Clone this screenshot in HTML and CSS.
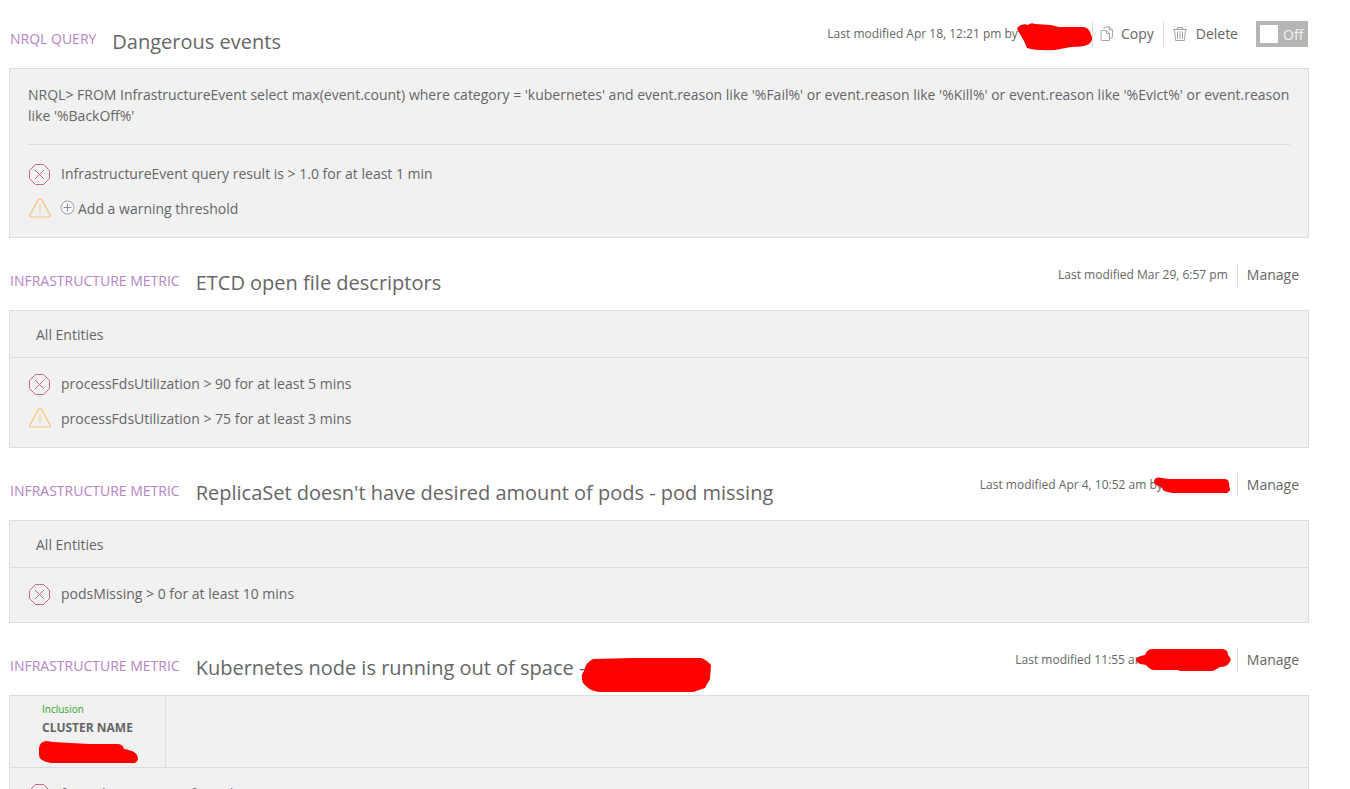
FILE: index.html
```html
<!DOCTYPE html>
<html lang="en">
<head>
<meta charset="utf-8">
<title>Alert conditions</title>
<link rel="stylesheet" href="styles.css">
</head>
<body>
<svg class="defs" aria-hidden="true">
  <symbol id="critical" viewBox="0 0 22 22"><path d="M6.500 1.500h8l6 6v8l-6 6h-8l-6-6v-8z M6 7l9 9m0-9l-9 9" fill="none" stroke="#d0667a"/></symbol>
  <symbol id="warning" viewBox="0 0 22 22"><path d="M9.500 1.600q1.500-2 3 0l8.600 15.400q.8 2-1.600 2h-17q-2.400 0-1.600-2z" fill="none" stroke="#f3c677" stroke-width="1.200"/><path d="M11 6v7.500m0 1.500v1.500" fill="none" stroke="#f6cf96" stroke-width="1.300"/></symbol>
</svg>
<main class="conditions">
  <section class="condition">
    <header class="head head-first">
      <span class="type">NRQL QUERY</span>
      <h2 class="title">Dangerous events</h2>
      <div class="actions actions-first">
        <span class="modified">Last modified Apr 18, 12:21 pm by</span>
        <svg class="mark mark-a" width="75" height="28" viewBox="0 0 75 28" aria-hidden="true"><path d="M1 4Q5 0 11 2Q14-1 18 1L34 2L42 4H66Q72 4 74 12Q77 17 72 21Q68 24 54 24L38 27Q20 28 10 25L7 18L3 11Q-1 7 1 4Z"/></svg>
        <button class="action" type="button"><svg class="action-icon" width="14" height="16" viewBox="0 0 14 16" aria-hidden="true"><path d="M4 3V2.500Q4 1 5.500 1H9.500L12.500 4V11Q12.500 12 11 12H10M1 5.500Q1 4.500 2 4.500H6.500L9.500 7.500V14.500H2Q1 14.500 1 13.500ZM6.500 4.500V7.500H9.500M9.500 1V4H12.500" fill="none" stroke="#a3a6b2"/></svg>Copy</button>
        <button class="action" type="button"><svg class="action-icon action-icon-bin" width="14" height="16" viewBox="0 0 14 16" aria-hidden="true"><path d="M0 3.500h14M4.500 3V1.500h5V3M1.500 4l1 10.500h9L12.500 4M4.500 5.500v7.500M7 5.500v7.500M9.500 5.500v7.500" fill="none" stroke="#a3a3aa"/></svg>Delete</button>
        <button class="toggle" type="button" role="switch" aria-checked="false"><span class="knob"></span>Off</button>
      </div>
    </header>
    <div class="card">
      <div class="query">
        <p class="nrql">NRQL&gt; FROM InfrastructureEvent select max(event.count) where category = 'kubernetes' and event.reason like '%Fail%' or event.reason like '%Kill%' or event.reason like '%Evict%' or event.reason like '%BackOff%'</p>
      </div>
      <ul class="thresholds thresholds-query">
        <li class="threshold"><svg class="level" aria-hidden="true"><use href="#critical"/></svg>InfrastructureEvent query result is &gt; 1.0 for at least 1 min</li>
        <li class="threshold"><svg class="level" aria-hidden="true"><use href="#warning"/></svg><button class="add" type="button"><svg class="plus" width="15" height="15" viewBox="0 0 15 15" aria-hidden="true"><circle cx="7.500" cy="7.500" r="6.500" fill="#fafafa" stroke="#999fa8"/><path d="M7.500 3.500v8M3.500 7.500h8" stroke="#8894a5"/></svg>Add a warning threshold</button></li>
      </ul>
    </div>
  </section>

  <section class="condition">
    <header class="head">
      <span class="type">INFRASTRUCTURE METRIC</span>
      <h2 class="title">ETCD open file descriptors</h2>
      <div class="actions">
        <span class="modified">Last modified Mar 29, 6:57 pm</span>
        <a class="manage" href="#">Manage</a>
      </div>
    </header>
    <div class="card">
      <div class="entities">All Entities</div>
      <ul class="thresholds">
        <li class="threshold"><svg class="level" aria-hidden="true"><use href="#critical"/></svg>processFdsUtilization &gt; 90 for at least 5 mins</li>
        <li class="threshold"><svg class="level" aria-hidden="true"><use href="#warning"/></svg>processFdsUtilization &gt; 75 for at least 3 mins</li>
      </ul>
    </div>
  </section>

  <section class="condition">
    <header class="head">
      <span class="type">INFRASTRUCTURE METRIC</span>
      <h2 class="title">ReplicaSet doesn't have desired amount of pods - pod missing</h2>
      <div class="actions">
        <span class="modified">Last modified Apr 4, 10:52 am by</span>
        <svg class="mark mark-b" width="77" height="17" viewBox="0 0 77 17" aria-hidden="true"><path d="M0 4Q1-1 8 1L15 2H70Q76 2 75 9Q78 14 73 16H18L10 14L7 10Q0 8 0 4Z"/></svg>
        <a class="manage" href="#">Manage</a>
      </div>
    </header>
    <div class="card">
      <div class="entities">All Entities</div>
      <ul class="thresholds">
        <li class="threshold"><svg class="level" aria-hidden="true"><use href="#critical"/></svg>podsMissing &gt; 0 for at least 10 mins</li>
      </ul>
    </div>
  </section>

  <section class="condition">
    <header class="head">
      <span class="type">INFRASTRUCTURE METRIC</span>
      <h2 class="title">Kubernetes node is running out of space -</h2>
      <svg class="mark mark-title" width="130" height="35" viewBox="0 0 130 35" aria-hidden="true"><path d="M12 1L50 0H120Q126 2 130 7L129 21L124 30L112 34H22Q10 34 5 28Q0 24 1 19Q0 17 3 13Q5 4 12 1Z"/></svg>
      <div class="actions">
        <span class="modified">Last modified 11:55 am</span>
        <svg class="mark mark-c" width="95" height="24" viewBox="0 0 95 24" aria-hidden="true"><path d="M0 12Q1 8 9 7Q11 1 16 1H86Q92 1 92 7Q97 11 93 15Q91 19 84 19L77 23H44L42 22H18Q14 22 10 17Q0 16 0 12Z"/></svg>
        <a class="manage" href="#">Manage</a>
      </div>
    </header>
    <div class="card">
      <div class="filters">
        <div class="filter">
          <span class="inclusion">Inclusion</span>
          <span class="filter-name">CLUSTER NAME</span>
          <svg class="mark mark-filter" width="100" height="23" viewBox="0 0 100 23" aria-hidden="true"><path d="M0 7Q1 0 8 0L14 1L50 3H78Q84 3 85 8Q99 10 99 18Q98 23 92 22H12Q0 20 0 14Z"/></svg>
        </div>
      </div>
      <ul class="thresholds">
        <li class="threshold"><svg class="level" aria-hidden="true"><use href="#critical"/></svg>fsUsedPercent &gt; 90 for at least 5 mins</li>
      </ul>
    </div>
  </section>
</main>
</body>
</html>
```
FILE: styles.css
```css
* { box-sizing: border-box; }
html { height: 100%; }
body {
  height: 100%;
  margin: 0;
  overflow: hidden;
  background: #fff;
  color: #666;
  font: 14px/21px "Open Sans", sans-serif;
}
button { border: 0; padding: 0; background: none; color: inherit; font: inherit; cursor: pointer; }
.defs { position: absolute; width: 0; height: 0; }
.conditions { padding: 0 41px 0 9px; }
.head { display: flex; align-items: flex-end; height: 72px; padding-left: 1px; }
.head-first { height: 68px; }
.type { margin-right: 16px; padding-bottom: 19px; color: #b884c6; white-space: nowrap; }
.title { margin: 0; padding-bottom: 13px; font-size: 20px; line-height: 28px; font-weight: 400; white-space: nowrap; }
.head-first .title { padding-bottom: 12px; }
.actions { display: flex; align-items: center; margin-left: auto; padding-bottom: 23px; height: 47px; }
.actions-first { padding-bottom: 21px; }
.modified { font-size: 12px; line-height: 18px; white-space: nowrap; }
.manage { margin-left: 9px; padding: 0 10px 0 9px; border-left: 1px solid #ddd; line-height: 24px; color: inherit; text-decoration: none; }
.action { display: flex; align-items: center; gap: 7px; height: 26px; padding: 0 9px 1px 7px; border-left: 1px solid #ddd; }
.action-icon-bin { margin: 0 2px; }
.toggle { display: flex; align-items: center; gap: 5px; width: 52px; height: 26px; margin: 0 1px 0 9px; padding-left: 4px; background: #b5b5b5; color: #f2f2f2; }
.knob { width: 18px; height: 18px; background: #fff; }
.mark { flex: none; fill: #f00; }
.mark-a { margin: 6px 0 0 -1px; }
.mark-b { margin: 0 -3px 0 -9px; }
.mark-c { margin: 0 -3px 0 -10px; }
.mark-title { margin: 0 0 2px -4px; }
.card { border: 1px solid #dcdcdc; background: #f1f1f1; }
.query { margin: 0 18px; padding: 15px 0 18px; border-bottom: 1px solid #dcdcdc; }
.nrql { margin: 0; }
.entities { padding: 13px 26px 12px; border-bottom: 1px solid #dcdcdc; }
.thresholds { display: grid; gap: 13px; margin: 0; padding: 15px 18px 17px 19px; list-style: none; }
.thresholds-query { padding-top: 18px; }
.threshold { display: flex; align-items: flex-start; gap: 10px; height: 22px; }
.level { flex: none; width: 22px; height: 22px; }
.add { display: flex; align-items: center; gap: 3px; margin-left: -1px; }
.plus { margin-bottom: 3px; }
.filters { display: flex; border-bottom: 1px solid #dcdcdc; }
.filter { display: flex; flex-direction: column; width: 156px; height: 71px; padding: 4px 0 0 32px; border-right: 1px solid #dcdcdc; }
.inclusion { color: #2fa81e; font-size: 10px; line-height: 18px; font-weight: 500; }
.filter-name { padding-top: 1px; font-size: 12px; line-height: 18px; font-weight: 700; }
.mark-filter { margin: 4px 0 0 -3px; }
```
